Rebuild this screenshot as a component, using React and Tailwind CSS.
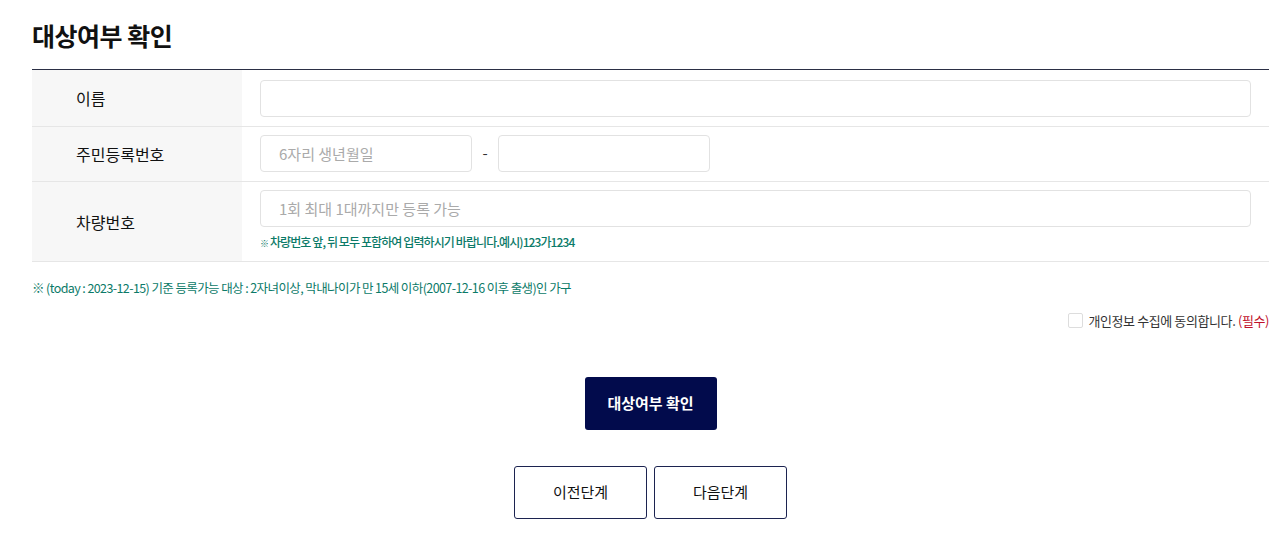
export default function App() {
    const font = { fontFamily: '"Noto Sans CJK KR", "Noto Sans", sans-serif' };

    return (
        <div className="min-h-[558px] w-full bg-white text-[#111]" style={font}>
            <div className="pl-8 pr-[11px] pt-[18px]">
                <h2 className="text-[25px] font-bold leading-[34px] tracking-[-0.5px] text-[#111]">
                    대상여부 확인
                </h2>

                <div className="mt-[17px] border-t border-[#2b2f45]">
                    {/* 이름 */}
                    <div className="flex border-b border-[#e6e6e6]">
                        <div className="flex w-[210px] items-center bg-[#f7f7f7] pl-[44px] text-[16px]">
                            이름
                        </div>
                        <div className="flex-1 px-[18px] pt-[10px] pb-[9px]">
                            <input
                                type="text"
                                className="h-[37px] w-full rounded-[4px] border border-[#e2e2e2] px-[18px] text-[15px] outline-none"
                            />
                        </div>
                    </div>

                    {/* 주민등록번호 */}
                    <div className="flex border-b border-[#e6e6e6]">
                        <div className="flex w-[210px] items-center bg-[#f7f7f7] pl-[44px] text-[16px]">
                            주민등록번호
                        </div>
                        <div className="flex flex-1 items-center px-[18px] pt-[8px] pb-[9px]">
                            <input
                                type="text"
                                placeholder="6자리 생년월일"
                                className="h-[37px] w-[212px] rounded-[4px] border border-[#e2e2e2] px-[18px] text-[15px] outline-none placeholder:text-[#aaa]"
                            />
                            <span className="w-[26px] text-center text-[15px] text-[#333]">-</span>
                            <input
                                type="password"
                                className="h-[37px] w-[212px] rounded-[4px] border border-[#e2e2e2] px-[18px] text-[15px] outline-none"
                            />
                        </div>
                    </div>

                    {/* 차량번호 */}
                    <div className="flex border-b border-[#e6e6e6]">
                        <div className="flex w-[210px] items-center bg-[#f7f7f7] pl-[44px] text-[16px]">
                            차량번호
                        </div>
                        <div className="flex-1 px-[18px] pt-[8px] pb-[8px]">
                            <input
                                type="text"
                                placeholder="1회 최대 1대까지만 등록 가능"
                                className="h-[37px] w-full rounded-[4px] border border-[#e2e2e2] px-[18px] text-[15px] outline-none placeholder:text-[#aaa]"
                            />
                            <p className="mt-[6px] text-[12px] font-medium leading-[18px] tracking-[-0.9px] text-[#0b7a68]">
                                <span className="text-[9px]">※</span> 차량번호 앞, 뒤 모두 포함하여 입력하시기 바랍니다.예시)123가1234
                            </p>
                        </div>
                    </div>
                </div>

                <p className="mt-[17px] text-[12.5px] leading-[18px] tracking-[-0.6px] text-[#0b7a68]">
                    ※ (today : 2023-12-15) 기준 등록가능 대상 : 2자녀이상, 막내나이가 만 15세 이하(2007-12-16 이후 출생)인 가구
                </p>

                <label className="mt-[14px] flex items-center justify-end gap-[5px] text-[13px] tracking-[-0.4px] text-[#333]">
                    <span className="h-[15px] w-[15px] rounded-[2px] border border-[#ddd] bg-white" />
                    <span>
                        개인정보 수집에 동의합니다. <span className="text-[#c0102a]">(필수)</span>
                    </span>
                </label>

                <div className="mt-[46px] flex justify-center">
                    <button className="h-[53px] w-[132px] rounded-[3px] bg-[#020b4c] text-[15px] font-bold text-white">
                        대상여부 확인
                    </button>
                </div>

                <div className="mt-[36px] flex justify-center gap-[7px]">
                    <button className="h-[53px] w-[133px] rounded-[3px] border border-[#1c2350] bg-white text-[15px] text-[#111]">
                        이전단계
                    </button>
                    <button className="h-[53px] w-[133px] rounded-[3px] border border-[#1c2350] bg-white text-[15px] text-[#111]">
                        다음단계
                    </button>
                </div>
            </div>
        </div>
    );
}
